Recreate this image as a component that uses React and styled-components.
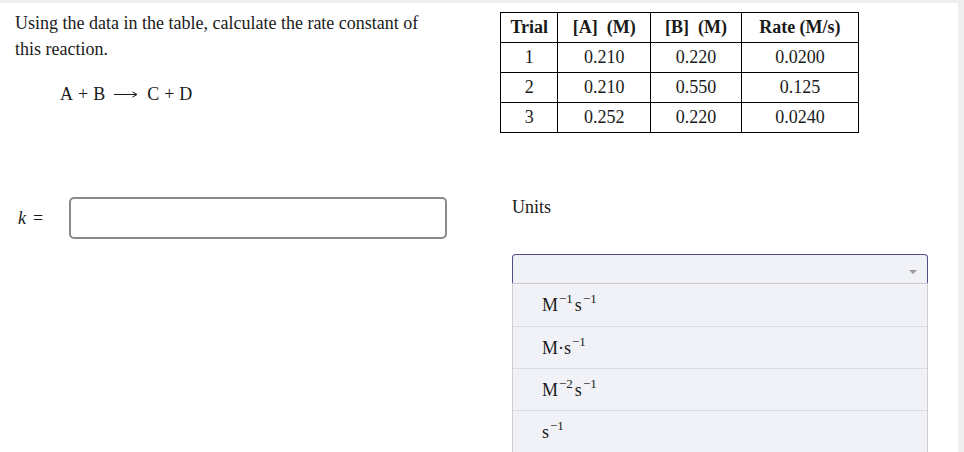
import React from 'react'
import styled, { createGlobalStyle } from 'styled-components'

const Global = createGlobalStyle`
  html, body {
    margin: 0;
    padding: 0;
    background: #efefef;
    height: 100%;
  }
  body {
    font-family: "Liberation Serif", "Times New Roman", serif;
    color: #1a1a1a;
  }
`

const Card = styled.div`
  margin-top: 3px;
  width: 958px;
  height: 449px;
  background: #ffffff;
  box-sizing: border-box;
  padding-top: 7px;
  display: grid;
  grid-template-columns: 500px 1fr;
  grid-template-rows: 177px 1fr;
  overflow: hidden;
`

const Left = styled.div`
  padding-left: 15px;
`

const Prompt = styled.p`
  margin: 0;
  width: 420px;
  font-size: 18px;
  line-height: 26px;
`

const Equation = styled.div`
  margin: 19px 0 0 45px;
  font-size: 18px;
  line-height: 26px;
  display: flex;
  align-items: center;
  gap: 5px;
`

const ArrowBox = styled.span`
  display: inline-flex;
  margin: 0 4px;
`

const Arrow = () => (
  <ArrowBox>
    <svg width="24" height="10" viewBox="0 0 24 10">
      <path d="M0 5.5 H22.5" stroke="#1a1a1a" strokeWidth="1" />
      <path d="M18.5 3 L23 5.5 L18.5 8" stroke="#1a1a1a" strokeWidth="1" fill="none" />
    </svg>
  </ArrowBox>
)

const Table = styled.table`
  margin-top: 2px;
  border-collapse: collapse;
  font-size: 18px;
  width: 359px;
`

const Th = styled.th`
  border: 1px solid #000;
  height: 29px;
  padding: 0;
  font-weight: bold;
  text-align: center;
  width: ${p => p.w}px;
`

const Td = styled.td`
  border: 1px solid #000;
  height: 29px;
  padding: 0;
  text-align: center;
`

const AnswerRow = styled.div`
  padding: 10px 0 0 18px;
  display: flex;
  align-items: center;
`

const Label = styled.span`
  width: 51px;
  font-size: 18px;
  white-space: nowrap;
  i { font-style: italic; margin-right: 7px; }
`

const Input = styled.div`
  width: 378px;
  height: 42px;
  box-sizing: border-box;
  border: 2px solid #8a8a8a;
  border-radius: 5px;
  background: #fff;
`

const Right = styled.div`
  padding-left: 12px;
`

const UnitsLabel = styled.div`
  font-size: 18px;
  line-height: 20px;
  margin-top: 10px;
`

const Select = styled.div`
  margin-top: 37px;
  width: 416px;
  height: 29px;
  box-sizing: border-box;
  background: #f1f2f7;
  border: 1.5px solid #514c85;
  border-bottom: none;
  border-radius: 4px 4px 0 0;
  display: flex;
  justify-content: flex-end;
  align-items: center;
  padding-right: 10px;
`

const Caret = styled.span`
  width: 0;
  height: 0;
  border-left: 4px solid transparent;
  border-right: 4px solid transparent;
  border-top: 4px solid #9a9a9a;
  margin-top: 5px;
`

const Options = styled.ul`
  list-style: none;
  margin: 0;
  padding: 0;
  width: 416px;
  box-sizing: border-box;
  border: 1px solid #cfcfcf;
  border-top: 1px solid #c8c8c8;
  background: #f1f2f7;
`

const Option = styled.li`
  height: 42px;
  box-sizing: border-box;
  border-top: ${p => (p.first ? 'none' : '1px solid #dcdde2')};
  padding: 11px 0 0 29px;
  font-size: 18px;
  line-height: 20px;
`

const Sup = styled.sup`
  font-size: 13px;
  vertical-align: 8px;
  line-height: 0;
  margin-left: 1px;
  margin-right: 2px;
`

const rows = [
  ['1', '0.210', '0.220', '0.0200'],
  ['2', '0.210', '0.550', '0.125'],
  ['3', '0.252', '0.220', '0.0240'],
]

export default function App () {
  return (
    <>
      <Global />
      <Card>
        <Left>
          <Prompt>Using the data in the table, calculate the rate constant of this reaction.</Prompt>
          <Equation>
            <span>A</span>
            <span>+</span>
            <span>B</span>
            <Arrow />
            <span>C</span>
            <span>+</span>
            <span>D</span>
          </Equation>
        </Left>
        <div>
          <Table>
            <thead>
              <tr>
                <Th w={57}>Trial</Th>
                <Th w={93}>[A]&nbsp; (M)</Th>
                <Th w={91}>[B]&nbsp; (M)</Th>
                <Th w={118}>Rate (M/s)</Th>
              </tr>
            </thead>
            <tbody>
              {rows.map(r => (
                <tr key={r[0]}>
                  {r.map((c, i) => <Td key={i}>{c}</Td>)}
                </tr>
              ))}
            </tbody>
          </Table>
        </div>
        <div>
          <AnswerRow>
            <Label><i>k</i>=</Label>
            <Input />
          </AnswerRow>
        </div>
        <Right>
          <UnitsLabel>Units</UnitsLabel>
          <Select><Caret /></Select>
          <Options>
            <Option first>M<Sup>−1</Sup>s<Sup>−1</Sup></Option>
            <Option>M·s<Sup>−1</Sup></Option>
            <Option>M<Sup>−2</Sup>s<Sup>−1</Sup></Option>
            <Option>s<Sup>−1</Sup></Option>
          </Options>
        </Right>
      </Card>
    </>
  )
}
